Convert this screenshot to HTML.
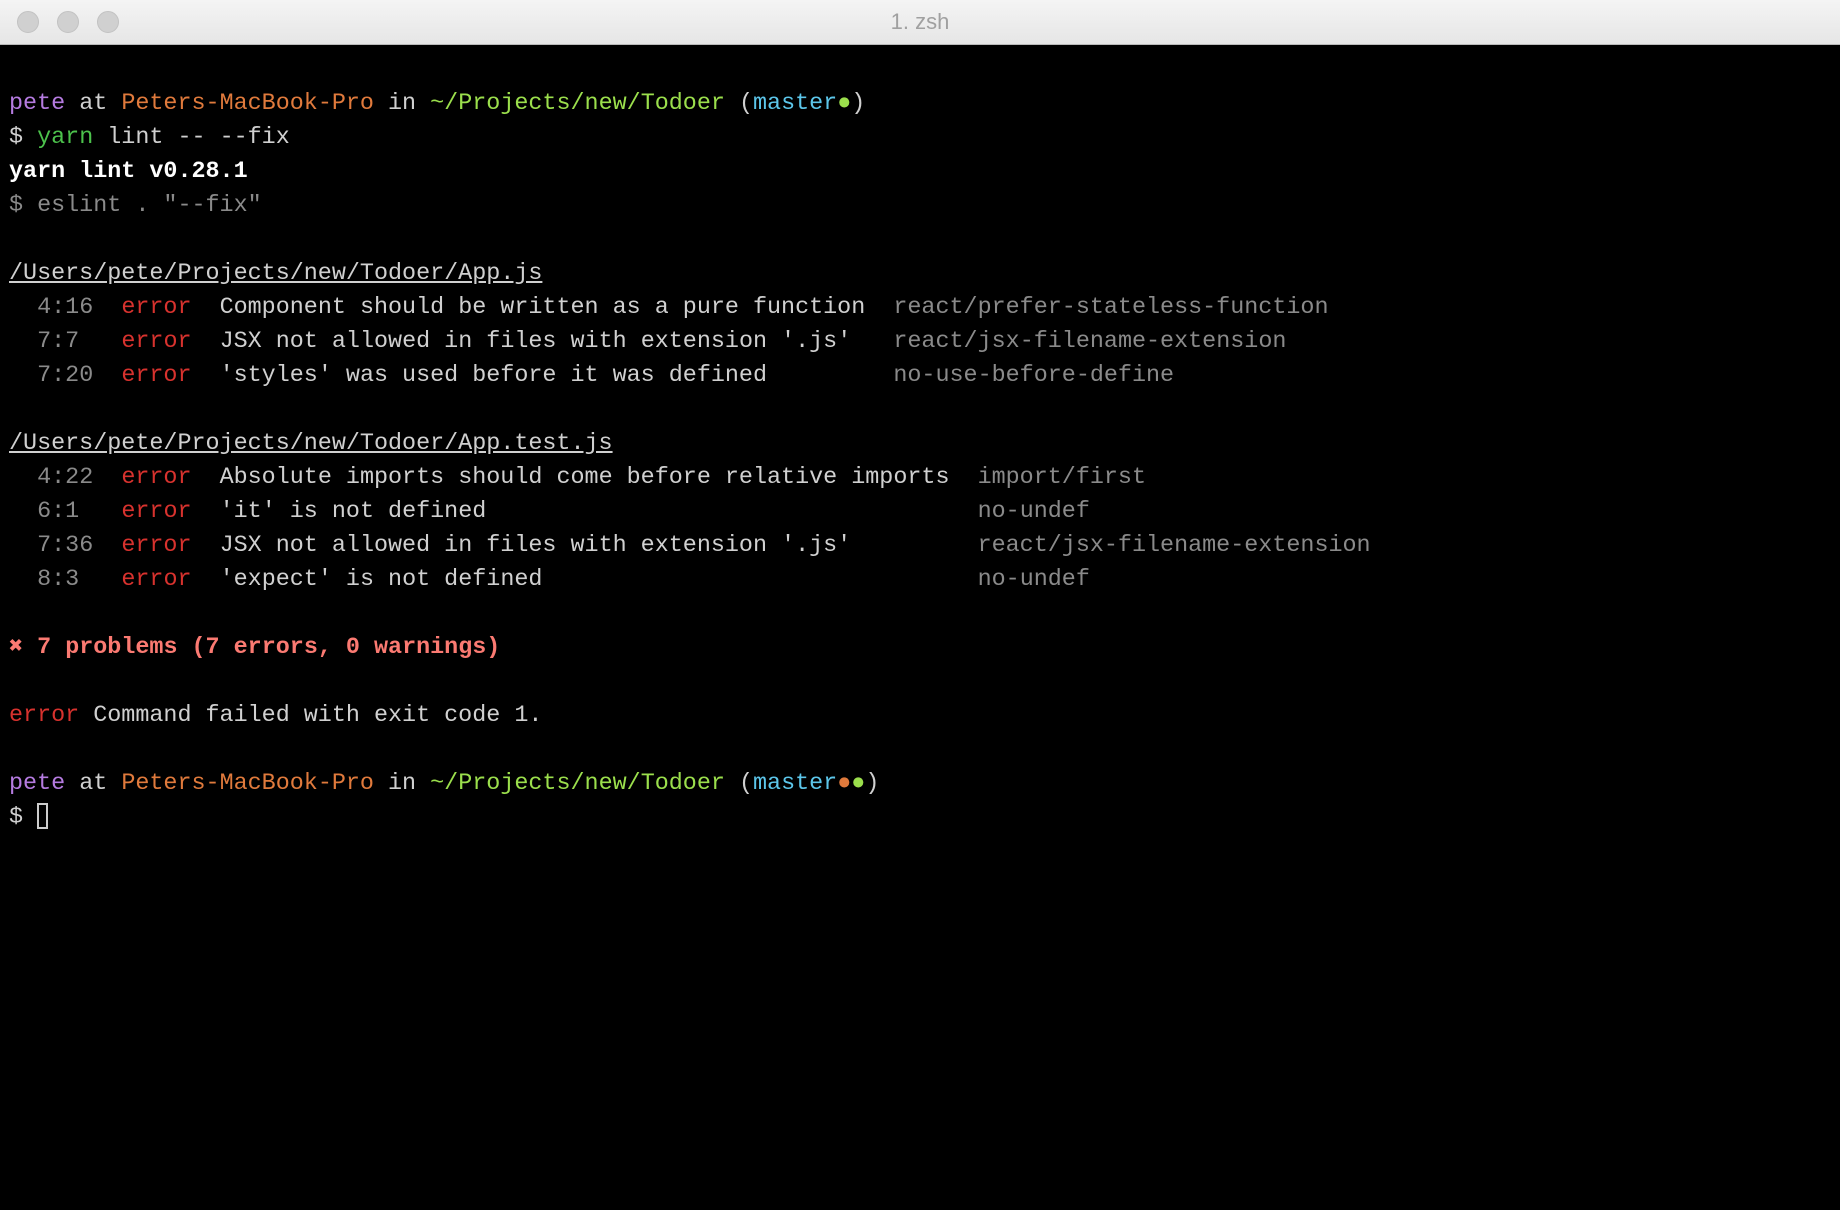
<!DOCTYPE html>
<html><head><meta charset="utf-8"><style>
html,body{margin:0;padding:0;background:#000;width:1840px;height:1210px;overflow:hidden}
.tb{position:absolute;left:0;top:0;width:1840px;height:44px;background:linear-gradient(#f4f4f4,#e6e6e6);border-bottom:1px solid #b9b9b9}
.dot{position:absolute;top:11px;width:22px;height:22px;border-radius:50%;background:#d0d0d0;border:1px solid #c2c2c2;box-sizing:border-box}
.title{position:absolute;left:0;width:1840px;top:9px;height:26px;line-height:26px;text-align:center;font-size:22px;font-family:"Liberation Sans",sans-serif;color:#a0a0a0}
pre{position:absolute;left:9px;top:87px;margin:0;font:23.4px/34px "Liberation Mono",monospace;color:#d0d0d0}
.p{color:#b57be0}.o{color:#e07a3c}.g{color:#9bdf4c}.c{color:#5cc6ea}.y{color:#4cc24c}
.w{color:#fff;font-weight:bold}.d{color:#8a8a8a}.r{color:#d8322e}.u{text-decoration:underline}
.pr{color:#fb7a72;font-weight:bold}
.cur{display:inline-block;width:11px;height:26px;border:2px solid #ccc;vertical-align:-6px;box-sizing:border-box}
</style></head><body>
<div class="tb"><div class="dot" style="left:17px"></div><div class="dot" style="left:57px"></div><div class="dot" style="left:97px"></div><div class="title">1. zsh</div></div>
<pre><span class="p">pete</span> at <span class="o">Peters-MacBook-Pro</span> in <span class="g">~/Projects/new/Todoer</span> (<span class="c">master</span><span class="g">●</span>)
$ <span class="y">yarn</span> lint -- --fix
<span class="w">yarn lint v0.28.1</span>
<span class="d">$ eslint . "--fix"</span>

<span class="u">/Users/pete/Projects/new/Todoer/App.js</span>
  <span class="d">4:16</span>  <span class="r">error</span>  Component should be written as a pure function  <span class="d">react/prefer-stateless-function</span>
  <span class="d">7:7</span>   <span class="r">error</span>  JSX not allowed in files with extension '.js'   <span class="d">react/jsx-filename-extension</span>
  <span class="d">7:20</span>  <span class="r">error</span>  'styles' was used before it was defined         <span class="d">no-use-before-define</span>

<span class="u">/Users/pete/Projects/new/Todoer/App.test.js</span>
  <span class="d">4:22</span>  <span class="r">error</span>  Absolute imports should come before relative imports  <span class="d">import/first</span>
  <span class="d">6:1</span>   <span class="r">error</span>  'it' is not defined                                   <span class="d">no-undef</span>
  <span class="d">7:36</span>  <span class="r">error</span>  JSX not allowed in files with extension '.js'         <span class="d">react/jsx-filename-extension</span>
  <span class="d">8:3</span>   <span class="r">error</span>  'expect' is not defined                               <span class="d">no-undef</span>

<span class="pr">✖ 7 problems (7 errors, 0 warnings)</span>

<span class="r">error</span> Command failed with exit code 1.

<span class="p">pete</span> at <span class="o">Peters-MacBook-Pro</span> in <span class="g">~/Projects/new/Todoer</span> (<span class="c">master</span><span class="o">●</span><span class="g">●</span>)
$ <span class="cur"></span></pre>
</body></html>
